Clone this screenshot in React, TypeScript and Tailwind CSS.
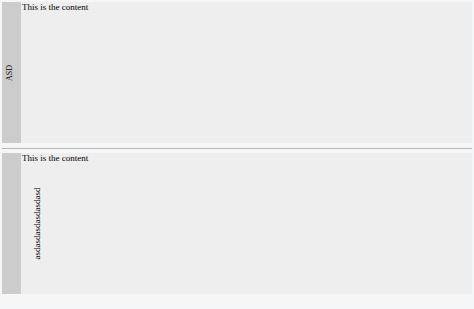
const panels = [
  { label: "ASD", size: "text-[8px]" },
  { label: "asdasdasdasdasdasd", size: "text-[9px]" },
]

export default function App() {
  return (
    <div className="w-[474px] h-[309px] bg-[#f4f6f7] p-[2px] font-['Liberation_Serif',serif] text-black">
      {panels.map((panel, index) => (
        <div key={index}>
          {index > 0 && (
            <div className="h-[10px] flex items-center">
              <div className="w-full h-[1px] bg-[#b4b8ba]" />
            </div>
          )}
          <div className="flex h-[141px] bg-[#eeeeee]">
            <div className="relative w-[19px] shrink-0 bg-[#cccccc] flex items-center">
              <span className={`-rotate-90 whitespace-nowrap leading-none ${panel.size}`}>{panel.label}</span>
            </div>
            <div className="pl-[1px] text-[9px] leading-[11px]">This is the content</div>
          </div>
        </div>
      ))}
    </div>
  )
}
